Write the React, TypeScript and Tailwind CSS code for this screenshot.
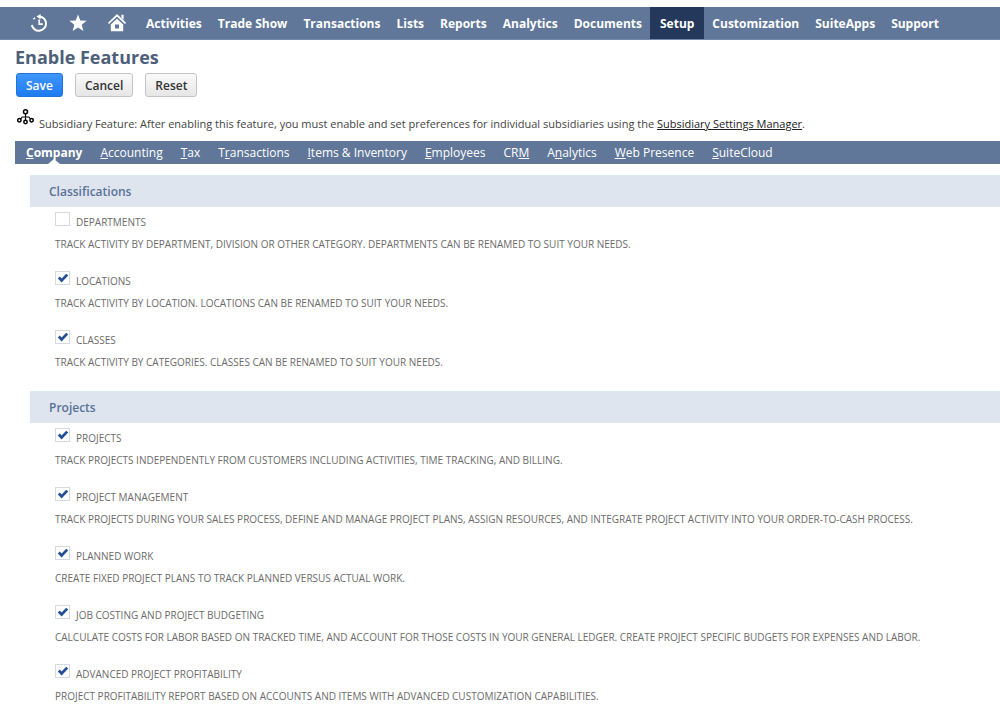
import { useState } from "react";
import clsx from "clsx";

type Feature = {
  id: string;
  label: string;
  description: string;
  enabled: boolean;
};

type Section = {
  title: string;
  features: Feature[];
};

const navItems = [
  "Activities",
  "Trade Show",
  "Transactions",
  "Lists",
  "Reports",
  "Analytics",
  "Documents",
  "Setup",
  "Customization",
  "SuiteApps",
  "Support",
];

// key is the index of the underlined access key letter
const tabs = [
  { label: "Company", key: 0 },
  { label: "Accounting", key: 0 },
  { label: "Tax", key: 0 },
  { label: "Transactions", key: 1 },
  { label: "Items & Inventory", key: 0 },
  { label: "Employees", key: 0 },
  { label: "CRM", key: 2 },
  { label: "Analytics", key: 1 },
  { label: "Web Presence", key: 0 },
  { label: "SuiteCloud", key: 0 },
];

const sections: Section[] = [
  {
    title: "Classifications",
    features: [
      {
        id: "departments",
        label: "Departments",
        description:
          "Track activity by department, division or other category. Departments can be renamed to suit your needs.",
        enabled: false,
      },
      {
        id: "locations",
        label: "Locations",
        description: "Track activity by location. Locations can be renamed to suit your needs.",
        enabled: true,
      },
      {
        id: "classes",
        label: "Classes",
        description: "Track activity by categories. Classes can be renamed to suit your needs.",
        enabled: true,
      },
    ],
  },
  {
    title: "Projects",
    features: [
      {
        id: "projects",
        label: "Projects",
        description:
          "Track projects independently from customers including activities, time tracking, and billing.",
        enabled: true,
      },
      {
        id: "project-management",
        label: "Project Management",
        description:
          "Track projects during your sales process, define and manage project plans, assign resources, and integrate project activity into your order-to-cash process.",
        enabled: true,
      },
      {
        id: "planned-work",
        label: "Planned Work",
        description: "Create fixed project plans to track planned versus actual work.",
        enabled: true,
      },
      {
        id: "job-costing",
        label: "Job Costing and Project Budgeting",
        description:
          "Calculate costs for labor based on tracked time, and account for those costs in your general ledger. Create project specific budgets for expenses and labor.",
        enabled: true,
      },
      {
        id: "project-profitability",
        label: "Advanced Project Profitability",
        description:
          "Project profitability report based on accounts and items with advanced customization capabilities.",
        enabled: true,
      },
    ],
  },
];

function HistoryIcon() {
  return (
    <svg viewBox="0 0 18 18" className="size-[18px]" fill="none" stroke="currentColor">
      <path d="M1.8 11a7.2 7.2 0 1 0 8-8.6" strokeWidth="2" />
      <path d="M9.2 5.4v4.8h3.6" strokeWidth="1.7" />
      <path d="M10.6 0v5.2L6.4 2.6z" fill="currentColor" stroke="none" />
      <path d="M3.4 5.2l1.6-1.5" strokeWidth="1.5" />
    </svg>
  );
}

function StarIcon() {
  return (
    <svg viewBox="0 0 18 18" className="size-[18px]" fill="currentColor">
      <path d="M9 .6l2.3 5.8 6.3.3-4.9 4 1.7 6.3L9 13.5 3.6 17l1.7-6.3-4.9-4 6.3-.3z" />
    </svg>
  );
}

function HomeIcon() {
  return (
    <svg viewBox="0 0 18 18" className="size-[18px]" fill="none" stroke="currentColor">
      <path d="M.5 9.4L9 1.3l8.5 8.1" strokeWidth="1.8" />
      <path d="M13.4.8h2.2v5l-2.2-2.1z" fill="currentColor" stroke="none" />
      <path
        d="M9 4.8l6.2 5.8v6.7H2.8v-6.7zM7 10.6v4h4v-4z"
        fill="currentColor"
        fillRule="evenodd"
        stroke="none"
      />
    </svg>
  );
}

function SubsidiaryIcon() {
  return (
    <svg viewBox="0 0 18 16" className="h-4 w-[18px] shrink-0 text-black" fill="none" stroke="currentColor">
      <g strokeWidth="1.5">
        <circle cx="8.5" cy="2.8" r="2" />
        <circle cx="2.4" cy="11.3" r="1.7" />
        <circle cx="8.5" cy="13" r="1.7" />
        <circle cx="14.6" cy="11.3" r="1.7" />
      </g>
      <path d="M8.5 4.8v6.5M3.6 10l1.6-2h6.6l1.6 2" strokeWidth="1.2" />
    </svg>
  );
}

function TopNav() {
  const iconLink = "flex w-[39px] items-center justify-center";

  return (
    <nav className="mt-[7px] flex h-[33px] items-stretch border-b border-[#7388ab] bg-[#607799] pl-[19px] text-[12px] font-bold text-white">
      <div className="mr-[2px] flex">
        <a href="#recent" aria-label="Recent records" className={iconLink}>
          <HistoryIcon />
        </a>
        <a href="#shortcuts" aria-label="Shortcuts" className={iconLink}>
          <StarIcon />
        </a>
        <a href="#home" aria-label="Home" className={iconLink}>
          <HomeIcon />
        </a>
      </div>
      {navItems.map((item) => (
        <a
          key={item}
          href={"#" + item}
          className={clsx(
            "flex items-center whitespace-nowrap pt-[2px]",
            item === "Setup" ? "bg-[#24385b] px-[10px]" : "px-2"
          )}
        >
          {item}
        </a>
      ))}
    </nav>
  );
}

function FeatureRow({ feature }: { feature: Feature }) {
  const [checked, setChecked] = useState(feature.enabled);

  return (
    <div className="h-[59px] pl-[25px] pt-[5px] text-[10px] uppercase text-[#6b6b6b]">
      <div className="flex items-start gap-[6px]">
        <span className="grid">
          <input
            id={feature.id}
            type="checkbox"
            checked={checked}
            onChange={(e) => setChecked(e.target.checked)}
            className="col-start-1 row-start-1 h-[14px] w-[15px] appearance-none border border-[#d5d9e0] bg-white"
          />
          {checked && (
            <svg
              viewBox="0 0 15 14"
              className="pointer-events-none col-start-1 row-start-1 h-[14px] w-[15px]"
              fill="none"
              stroke="#24509a"
              strokeWidth="2.8"
            >
              <path d="M3.8 6.6l2.8 2.8 5.6-5.8" />
            </svg>
          )}
        </span>
        <label htmlFor={feature.id} className="pt-[2px] leading-[16px]">
          {feature.label}
        </label>
      </div>
      <p className="whitespace-nowrap pt-[6px] leading-[16px]">{feature.description}</p>
    </div>
  );
}

export default function App() {
  const [activeTab, setActiveTab] = useState("Company");

  return (
    <div className="min-h-screen overflow-x-hidden bg-white font-['Open_Sans',sans-serif]">
      <TopNav />

      <main className="pl-[15px]">
        <h1 className="pt-[5px] text-[18px] font-bold leading-[24px] text-[#4d5f79]">Enable Features</h1>

        <div className="mt-1 flex gap-3 pl-px text-[12px] font-semibold text-[#333333]">
          <button className="h-6 rounded-[3px] border border-[#1f74e0] bg-linear-to-b from-[#3f97fd] to-[#1d7af2] px-[9px] pt-px text-white">
            Save
          </button>
          <button className="h-6 rounded-[3px] border border-[#c4c4c4] bg-linear-to-b from-[#fafafa] to-[#e6e6e6] px-[9px] pt-px">
            Cancel
          </button>
          <button className="h-6 rounded-[3px] border border-[#c4c4c4] bg-linear-to-b from-[#fafafa] to-[#e6e6e6] px-[9px] pt-px">
            Reset
          </button>
        </div>

        <div className="mt-3 flex h-8 items-start gap-1 pl-[2px] text-[11px] text-[#444444]">
          <SubsidiaryIcon />
          <p className="whitespace-nowrap pt-[7px] leading-[16px]">
            Subsidiary Feature: After enabling this feature, you must enable and set preferences for individual
            subsidiaries using the{" "}
            <a href="#subsidiary-settings" className="text-[#222222] underline">
              Subsidiary Settings Manager
            </a>
            .
          </p>
        </div>

        <div role="tablist" className="flex h-[23px] items-stretch bg-[#607799] pl-[2px] text-[12px] text-white">
          {tabs.map(({ label, key }) => (
            <button
              key={label}
              role="tab"
              aria-selected={activeTab === label}
              onClick={() => setActiveTab(label)}
              className={clsx(
                "relative whitespace-nowrap px-[9px] pt-px",
                activeTab === label && "font-bold"
              )}
            >
              {label.slice(0, key)}
              <span className="underline">{label[key]}</span>
              {label.slice(key + 1)}
              {activeTab === label && (
                <span className="absolute bottom-0 left-1/2 -translate-x-1/2 border-x-[6px] border-b-[5px] border-x-transparent border-b-white" />
              )}
            </button>
          ))}
        </div>

        <div className="pl-[15px] pt-[11px]">
          {sections.map((section) => (
            <section key={section.title} className="pb-[7px]">
              <h2 className="bg-[#dfe5ef] pl-[19px] pt-px text-[12px] font-semibold leading-[31px] text-[#5a7197]">
                {section.title}
              </h2>
              {section.features.map((feature) => (
                <FeatureRow key={feature.id} feature={feature} />
              ))}
            </section>
          ))}
        </div>
      </main>
    </div>
  );
}
